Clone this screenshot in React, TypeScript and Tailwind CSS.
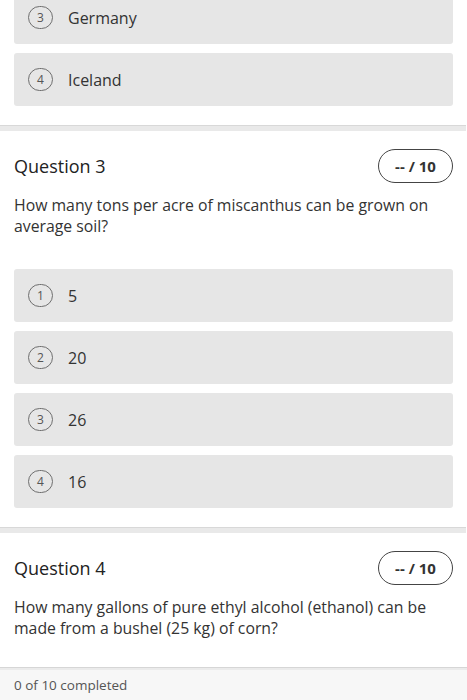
import React from 'react'

type Question = {
  number: number
  text: string
  options: string[]
}

const font = { fontFamily: '"Open Sans", "Liberation Sans", sans-serif' }

function Option({ index, label }: { index: number; label: string }) {
  return (
    <div className="h-[53px] rounded-[3px] bg-[#e6e6e6] flex items-center pl-[14px]">
      <span className="w-[25px] h-[23px] rounded-full border border-[#6f6f6f] flex items-center justify-center text-[12px] text-[#555] shrink-0">
        {index}
      </span>
      <span className="ml-[15px] text-[16px] text-[#333]">{label}</span>
    </div>
  )
}

function OptionList({ start, options }: { start: number; options: string[] }) {
  return (
    <div className="flex flex-col gap-[9px] px-[14px]">
      {options.map((o, i) => (
        <Option key={o} index={start + i} label={o} />
      ))}
    </div>
  )
}

function Separator() {
  return <div className="h-[6px] w-[466px] border-t border-[#d8d8d8] bg-[#e9e9e9]" />
}

function QuestionHeader({ q }: { q: Question }) {
  return (
    <div className="px-[14px] pt-[18px]">
      {/* title row + score pill */}
      <div className="flex items-center justify-between h-[34px]">
        <h2 className="text-[18px] font-medium text-[#222]">Question {q.number}</h2>
        <div className="w-[75px] h-[34px] rounded-full border-[1.5px] border-[#444] flex items-center justify-center text-[15px] font-bold text-[#333]">
          -- / 10
        </div>
      </div>
      <p className="mt-[12px] text-[15.8px] leading-[21px] text-[#333]">{q.text}</p>
    </div>
  )
}

export default function App() {
  const q3: Question = {
    number: 3,
    text: 'How many tons per acre of miscanthus can be grown on average soil?',
    options: ['5', '20', '26', '16'],
  }
  const q4: Question = {
    number: 4,
    text: 'How many gallons of pure ethyl alcohol (ethanol) can be made from a bushel (25 kg) of corn?',
    options: [],
  }

  return (
    <div className="w-[467px] h-[700px] overflow-hidden bg-white flex flex-col" style={font}>
      {/* tail of question 2 */}
      <div className="-mt-[9px] pb-[19px]">
        <OptionList start={3} options={['Germany', 'Iceland']} />
      </div>
      <Separator />

      <QuestionHeader q={q3} />
      <div className="mt-[32px] pb-[19px]">
        <OptionList start={1} options={q3.options} />
      </div>
      <Separator />

      <QuestionHeader q={q4} />

      {/* progress footer */}
      <div className="mt-auto">
        <div className="h-[3px] border-t border-[#d6d6d6] bg-[#ebebeb]" />
        <div className="h-[30px] bg-[#f7f7f7] flex items-center px-[14px] text-[13.5px] text-[#555]">
          0 of 10 completed
        </div>
      </div>
    </div>
  )
}
